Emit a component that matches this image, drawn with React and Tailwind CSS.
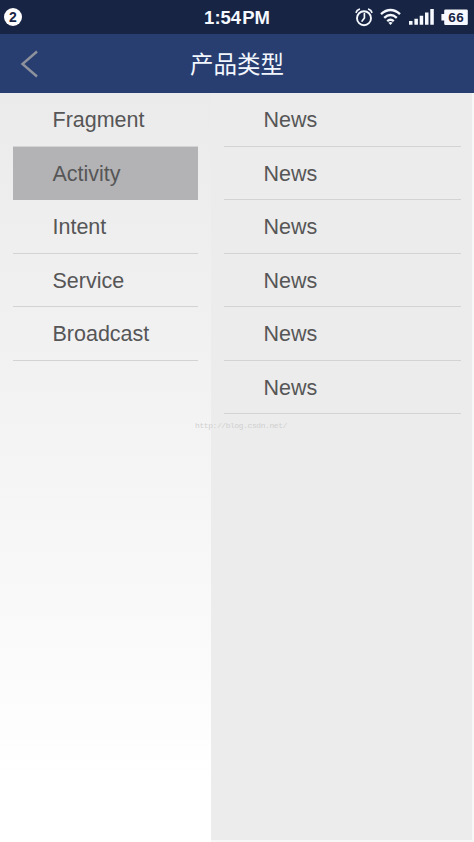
const categories = ["Fragment", "Activity", "Intent", "Service", "Broadcast"];
const items = ["News", "News", "News", "News", "News", "News"];

function Row({ label, selected }) {
  return (
    <li
      className={
        "flex h-[53.5px] items-center border-b pl-[39.5px] pt-[3.2px] text-[21.5px] leading-none text-[#565657] " +
        (selected ? "border-[#b3b3b5] bg-[#b3b3b5]" : "border-[#d3d3d4]")
      }
    >
      {label}
    </li>
  );
}

function StatusIcons() {
  return (
    <svg className="h-[22px] w-[116px]" viewBox="354 6 116 22" fill="none">
      <g stroke="#f5f9ff" strokeWidth="1.9" strokeLinecap="round">
        <circle cx="364" cy="18.2" r="7" />
        <path d="M364.4 13.5V18l-2.3 3" strokeWidth="1.7" />
        <path d="M356.2 12.3q.7-2.4 3.1-3.1M371.8 12.3q-.7-2.4-3.1-3.1" strokeWidth="1.7" />
      </g>
      <g stroke="#f5f9ff" strokeWidth="2.4">
        <path d="M381 14.2q9.5-8.2 19 0M384.2 17.8q6.3-5.6 12.6 0M387.2 21.1q3.3-2.8 6.6 0" />
      </g>
      <path d="M390.5 25l-2.1-2.2q2.1-1.7 4.2 0z" fill="#f5f9ff" />
      <path
        d="M409 21h3.5v3.8H409zM414.4 18.8h3.5v6h-3.5zM419.7 15.8h3.5v9h-3.5zM425 12.5h3.5v12.3H425zM430.3 9h3.5v15.8h-3.5z"
        fill="#f5f9ff"
      />
      <path d="M445.5 9.5h21q1.3 0 1.3 1.3v12.9q0 1.3-1.3 1.3h-21q-1.3 0-1.3-1.3V20.5h-2.8v-6.6h2.8v-3.1q0-1.3 1.3-1.3z" fill="#f5f9ff" />
      <text x="456.2" y="22" textAnchor="middle" fontSize="13.5" fontWeight="700" letterSpacing=".4" fill="#182443">
        66
      </text>
    </svg>
  );
}

export default function App() {
  return (
    <div className="flex h-[842px] w-[474px] flex-col overflow-hidden bg-[#f7f7f7] font-['Liberation_Sans','Noto_Sans_CJK_SC',sans-serif]">
      <div className="grid h-[34px] shrink-0 grid-cols-[1fr_auto_1fr] items-center bg-[#182443] pl-1 pr-1 text-[#f5f9ff]">
        <span className="flex size-[18px] items-center justify-center rounded-full bg-white text-[14px] font-bold leading-none text-[#182443]">
          2
        </span>
        <time className="pt-[2px] text-[18.5px] font-bold leading-none">
          1:54<span className="ml-px">PM</span>
        </time>
        <div className="flex justify-end">
          <StatusIcons />
        </div>
      </div>

      <header className="grid h-[59px] shrink-0 grid-cols-[1fr_auto_1fr] items-center bg-[#293e70]">
        <button aria-label="Back" className="ml-[20px] w-[20px]">
          <svg className="h-[28px] w-[20px]" viewBox="0 0 20 28" fill="none">
            <path d="M17 1.5L2.5 14 17 26.5" stroke="#8e929d" strokeWidth="2.4" />
          </svg>
        </button>
        <h1 className="pt-[5px] text-[23.5px] leading-none text-[#f2f7ff]">产品类型</h1>
        <span />
      </header>

      <main className="flex min-h-0 flex-1">
        <ul className="w-[211px] bg-[linear-gradient(to_bottom,#ebebeb_0%,#f3f3f4_43%,#fafafa_73%,#ffffff_92%)] pl-[13px] pr-[13.5px]">
          {categories.map((label) => (
            <Row key={label} label={label} selected={label === "Activity"} />
          ))}
        </ul>
        <section className="relative mb-[2px] mr-[2px] flex-1 bg-[#ececec] pl-[13px] pr-[11px]">
          <ul>
            {items.map((label, index) => (
              <Row key={index} label={label} />
            ))}
          </ul>
          <span className="absolute left-[-16px] top-[327px] whitespace-nowrap font-['Liberation_Mono',monospace] text-[8px] leading-[12px] tracking-[-0.42px] text-[#d0d0d0]">
            http://blog.csdn.net/
          </span>
        </section>
      </main>
    </div>
  );
}
